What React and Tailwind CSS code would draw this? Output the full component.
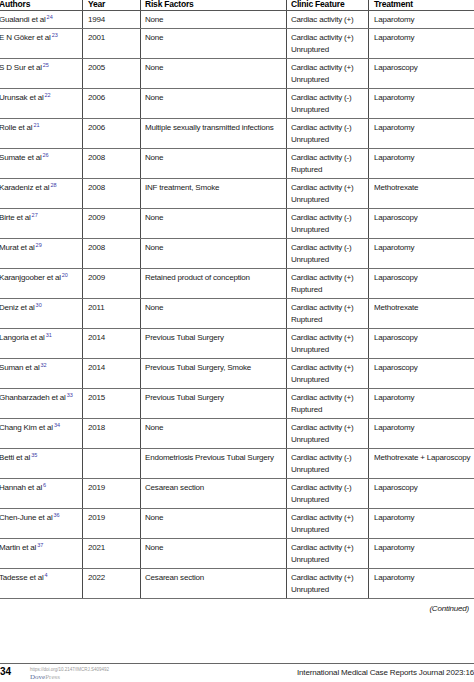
const rows = [
  ["Gualandi et al", "24", "1994", "None", "Cardiac activity (+)", "", "Laparotomy"],
  ["E N Göker et al", "23", "2001", "None", "Cardiac activity (+)", "Unruptured", "Laparotomy"],
  ["S D Sur et al", "25", "2005", "None", "Cardiac activity (+)", "Unruptured", "Laparoscopy"],
  ["Urunsak et al", "22", "2006", "None", "Cardiac activity (-)", "Unruptured", "Laparotomy"],
  ["Rolle et al", "21", "2006", "Multiple sexually transmitted infections", "Cardiac activity (-)", "Unruptured", "Laparotomy"],
  ["Sumate et al", "26", "2008", "None", "Cardiac activity (-)", "Ruptured", "Laparotomy"],
  ["Karadeniz et al", "28", "2008", "INF treatment, Smoke", "Cardiac activity (+)", "Unruptured", "Methotrexate"],
  ["Birte et al", "27", "2009", "None", "Cardiac activity (-)", "Unruptured", "Laparoscopy"],
  ["Murat et al", "29", "2008", "None", "Cardiac activity (-)", "Unruptured", "Laparotomy"],
  ["Karanjgoober et al", "20", "2009", "Retained product of conception", "Cardiac activity (+)", "Ruptured", "Laparoscopy"],
  ["Deniz et al", "30", "2011", "None", "Cardiac activity (+)", "Ruptured", "Methotrexate"],
  ["Langoria et al", "31", "2014", "Previous Tubal Surgery", "Cardiac activity (+)", "Unruptured", "Laparoscopy"],
  ["Suman et al", "32", "2014", "Previous Tubal Surgery, Smoke", "Cardiac activity (+)", "Unruptured", "Laparoscopy"],
  ["Ghanbarzadeh et al", "33", "2015", "Previous Tubal Surgery", "Cardiac activity (+)", "Ruptured", "Laparotomy"],
  ["Chang Kim et al", "34", "2018", "None", "Cardiac activity (+)", "Unruptured", "Laparotomy"],
  ["Betti et al", "35", "", "Endometriosis Previous Tubal Surgery", "Cardiac activity (-)", "Unruptured", "Methotrexate + Laparoscopy"],
  ["Hannah et al", "6", "2019", "Cesarean section", "Cardiac activity (-)", "Unruptured", "Laparoscopy"],
  ["Chen-June et al", "36", "2019", "None", "Cardiac activity (+)", "Unruptured", "Laparotomy"],
  ["Martin et al", "37", "2021", "None", "Cardiac activity (+)", "Unruptured", "Laparotomy"],
  ["Tadesse et al", "4", "2022", "Cesarean section", "Cardiac activity (+)", "Unruptured", "Laparotomy"],
];

const Row = ({ r, first }) => (
  <div
    className={`flex border-b border-[#707070] ${first ? "h-[18px]" : "h-[30px]"}`}
  >
    <div className="w-[84px] shrink-0 border-r border-[#4a4a4a] pt-[3px] -ml-[1px] pl-0 whitespace-nowrap">
      {r[0]}
      <span className="text-[5.5px] leading-[5px] text-[#3c3ca8] relative -top-[3px] ml-[1px] tracking-normal">{r[1]}</span>
    </div>
    <div className="w-[58px] shrink-0 border-r border-[#4a4a4a] pt-[3px] pl-[5px]">{r[2]}</div>
    <div className="w-[146px] shrink-0 border-r border-[#4a4a4a] pt-[3px] pl-[4px] whitespace-nowrap">{r[3]}</div>
    <div className="w-[82px] shrink-0 border-r border-[#4a4a4a] pt-[3px] pl-[4px] whitespace-nowrap">
      <div>{r[4]}</div>
      {r[5] && <div>{r[5]}</div>}
    </div>
    <div className="flex-1 pt-[3px] pl-[5px] whitespace-nowrap">{r[6]}</div>
  </div>
);

export default function App() {
  return (
    <div
      className="w-[474px] h-[682px] overflow-hidden bg-white text-[#1a1a1a] text-[8px] tracking-[-0.2px] leading-[11.5px]"
      style={{ fontFamily: '"Liberation Sans", Arial, sans-serif' }}
    >
      <div className="flex h-[11px] border-b border-[#555] font-bold text-[8.5px] leading-[8px] text-black">
        <div className="w-[84px] shrink-0 border-r border-[#4a4a4a] -ml-[1px]">Authors</div>
        <div className="w-[58px] shrink-0 border-r border-[#4a4a4a] pl-[5px]">Year</div>
        <div className="w-[146px] shrink-0 border-r border-[#4a4a4a] pl-[4px]">Risk Factors</div>
        <div className="w-[82px] shrink-0 border-r border-[#4a4a4a] pl-[4px]">Clinic Feature</div>
        <div className="flex-1 pl-[5px]">Treatment</div>
      </div>
      {rows.map((r, i) => (
        <Row key={i} r={r} first={i === 0} />
      ))}
      <div className="flex justify-end pr-[5px] pt-[4px] h-[64px] italic">(Continued)</div>
      <div className="border-t border-[#666] flex items-start justify-between pt-[2px] tracking-normal">
        <div className="flex items-start">
          <div className="font-bold text-[10px] leading-[11px] w-[30px] text-black">34</div>
          <div className="flex flex-col pt-[1px]">
            <div className="text-[4.5px] leading-[5px] text-[#999]">https://doi.org/10.2147/IMCRJ.S409492</div>
            <div className="text-[7px] leading-[8px] pt-[1px]">
              <span className="text-[#5a6e9a]" style={{ fontFamily: '"Liberation Serif", serif' }}>Dove</span>
              <span className="text-[#aaa]" style={{ fontFamily: '"Liberation Serif", serif' }}>Press</span>
            </div>
          </div>
        </div>
        <div className="text-[8px] tracking-[-0.15px] leading-[11px] pt-[1px] text-[#222]">
          International Medical Case Reports Journal 2023:16
        </div>
      </div>
    </div>
  );
}
